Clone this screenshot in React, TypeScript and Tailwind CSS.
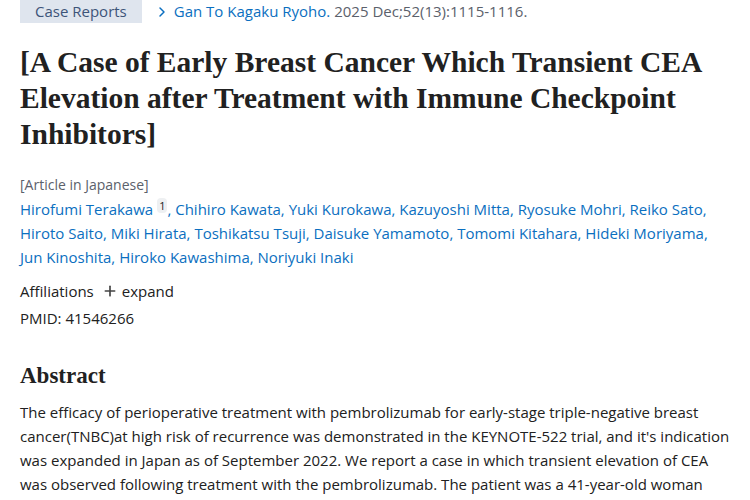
import { ChevronRight, Plus } from "lucide-react";

const authors = [
  ["Hirofumi Terakawa", true],
  ["Chihiro Kawata", false],
  ["Yuki Kurokawa", false],
  ["Kazuyoshi Mitta", false],
  ["Ryosuke Mohri", false],
  ["Reiko Sato", false],
  ["Hiroto Saito", false],
  ["Miki Hirata", false],
  ["Toshikatsu Tsuji", false],
  ["Daisuke Yamamoto", false],
  ["Tomomi Kitahara", false],
  ["Hideki Moriyama", false],
  ["Jun Kinoshita", false],
  ["Hiroko Kawashima", false],
  ["Noriyuki Inaki", false],
] as const;

export default function App() {
  return (
    <main
      className="min-h-screen bg-white px-5 text-[#212121]"
      style={{ fontFamily: '"Open Sans", "Noto Sans", sans-serif' }}
    >
      <div className="flex items-center gap-3 text-[15px]">
        <span className="flex h-[23px] items-center bg-[#dfe5ee] px-[15px] text-[#3d5479]">
          Case Reports
        </span>
        <span className="flex items-center">
          <ChevronRight className="mr-1 h-4 w-4 text-[#0b6fc0]" strokeWidth={2.2} />
          <a className="text-[#0b6fc0]">Gan To Kagaku Ryoho.</a>
          <span className="ml-1 text-[#5b616b]">2025 Dec;52(13):1115-1116.</span>
        </span>
      </div>

      <h1
        className="mt-[21px] text-[29.5px] font-bold leading-[36px] text-[#212121]"
        style={{ fontFamily: '"Liberation Serif", serif' }}
      >
        [A Case of Early Breast Cancer Which Transient CEA Elevation after Treatment with Immune
        Checkpoint Inhibitors]
      </h1>

      <p className="mt-[21px] text-[14px] leading-[24px] text-[#5b616b]">[Article in Japanese]</p>
      <p className="max-w-[690px] text-[15px] leading-[24px] text-[#0b6fc0]">
        {authors.map(([name, sup], i) => (
          <span key={name}>
            <a>{name}</a>
            {sup && (
              <sup className="ml-1 rounded-sm bg-[#eef0f2] px-[2px] text-[11px] text-[#212121]">1</sup>
            )}
            {i < authors.length - 1 ? ", " : ""}
          </span>
        ))}
      </p>

      <div className="mt-[10px] flex items-center text-[15px] leading-[24px]">
        <span>Affiliations</span>
        <Plus className="ml-2 mr-1 h-4 w-4 text-[#444]" strokeWidth={2.5} />
        <span>expand</span>
      </div>
      <p className="mt-[3px] text-[15px] leading-[24px]">PMID: 41546266</p>

      <h2
        className="mt-[30px] text-[23px] font-bold leading-[32px]"
        style={{ fontFamily: '"Liberation Serif", serif' }}
      >
        Abstract
      </h2>
      <p className="mt-[8px] max-w-[712px] text-[15px] leading-[24px]">
        The efficacy of perioperative treatment with pembrolizumab for early-stage triple-negative
        breast cancer(TNBC)at high risk of recurrence was demonstrated in the KEYNOTE-522 trial, and
        it's indication was expanded in Japan as of September 2022. We report a case in which
        transient elevation of CEA was observed following treatment with the pembrolizumab. The
        patient was a 41-year-old woman diagnosed with triple-negative breast cancer.
      </p>
    </main>
  );
}
